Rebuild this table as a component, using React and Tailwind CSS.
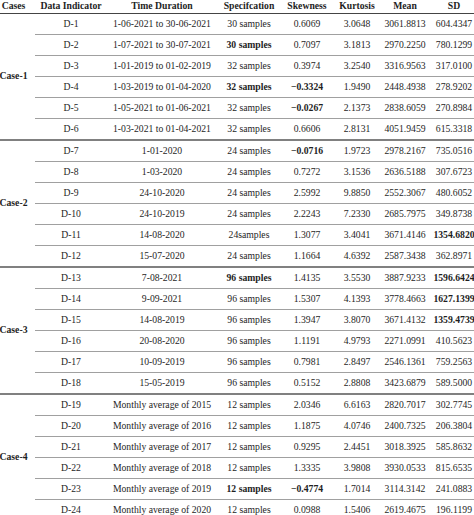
import React from "react";

const cols = "grid grid-cols-[72px_110px_64px_52px_48px_48px_50px]";

const groups = [
  {
    name: "Case-1",
    rows: [
      ["D-1", "1-06-2021 to 30-06-2021", "30 samples", "0.6069", "3.0648", "3061.8813", "604.4347"],
      ["D-2", "1-07-2021 to 30-07-2021", "*30 samples", "0.7097", "3.1813", "2970.2250", "780.1299"],
      ["D-3", "1-01-2019 to 01-02-2019", "32 samples", "0.3974", "3.2540", "3316.9563", "317.0100"],
      ["D-4", "1-03-2019 to 01-04-2020", "*32 samples", "*−0.3324", "1.9490", "2448.4938", "278.9202"],
      ["D-5", "1-05-2021 to 01-06-2021", "32 samples", "*−0.0267", "2.1373", "2838.6059", "270.8984"],
      ["D-6", "1-03-2021 to 01-04-2021", "32 samples", "0.6606", "2.8131", "4051.9459", "615.3318"],
    ],
  },
  {
    name: "Case-2",
    rows: [
      ["D-7", "1-01-2020", "24 samples", "*−0.0716", "1.9723", "2978.2167", "735.0516"],
      ["D-8", "1-03-2020", "24 samples", "0.7272", "3.1536", "2636.5188", "307.6723"],
      ["D-9", "24-10-2020", "24 samples", "2.5992", "9.8850", "2552.3067", "480.6052"],
      ["D-10", "24-10-2019", "24 samples", "2.2243", "7.2330", "2685.7975", "349.8738"],
      ["D-11", "14-08-2020", "24samples", "1.3077", "3.4041", "3671.4146", "*1354.6820"],
      ["D-12", "15-07-2020", "24 samples", "1.1664", "4.6392", "2587.3438", "362.8971"],
    ],
  },
  {
    name: "Case-3",
    rows: [
      ["D-13", "7-08-2021", "*96 samples", "1.4135", "3.5530", "3887.9233", "*1596.6424"],
      ["D-14", "9-09-2021", "96 samples", "1.5307", "4.1393", "3778.4663", "*1627.1399"],
      ["D-15", "14-08-2019", "96 samples", "1.3947", "3.8070", "3671.4132", "*1359.4739"],
      ["D-16", "20-08-2020", "96 samples", "1.1191", "4.9793", "2271.0991", "410.5623"],
      ["D-17", "10-09-2019", "96 samples", "0.7981", "2.8497", "2546.1361", "759.2563"],
      ["D-18", "15-05-2019", "96 samples", "0.5152", "2.8808", "3423.6879", "589.5000"],
    ],
  },
  {
    name: "Case-4",
    rows: [
      ["D-19", "Monthly average of 2015", "12 samples", "2.0346", "6.6163", "2820.7017", "302.7745"],
      ["D-20", "Monthly average of 2016", "12 samples", "1.1875", "4.0746", "2400.7325", "206.3804"],
      ["D-21", "Monthly average of 2017", "12 samples", "0.9295", "2.4451", "3018.3925", "585.8632"],
      ["D-22", "Monthly average of 2018", "12 samples", "1.3335", "3.9808", "3930.0533", "815.6535"],
      ["D-23", "Monthly average of 2019", "*12 samples", "*−0.4774", "1.7014", "3114.3142", "241.0883"],
      ["D-24", "Monthly average of 2020", "12 samples", "0.0988", "1.5406", "2619.4675", "196.1199"],
    ],
  },
];

const headers = ["Data Indicator", "Time Duration", "Specifcation", "Skewness", "Kurtosis", "Mean", "SD"];

// a leading "*" marks a bold value
function Cell({ value }) {
  const bold = value.startsWith("*");
  return (
    <div className={`flex items-center justify-center whitespace-nowrap ${bold ? "font-bold" : ""}`}>
      {bold ? value.slice(1) : value}
    </div>
  );
}

function App() {
  return (
    <div className="w-[474px] h-[515px] overflow-hidden bg-white">
      <div className="w-[487px] -ml-[8px] font-['Liberation_Serif',serif] text-[9.7px] text-[#1e1e1e]">
        <div className="grid grid-cols-[43px_72px_110px_64px_52px_48px_48px_50px] h-[14px] border-b border-[#444] font-bold">
          <div className="flex justify-center leading-[11px]">Cases</div>
          {headers.map((h) => (
            <div key={h} className="flex justify-center leading-[11px] whitespace-nowrap">
              {h}
            </div>
          ))}
        </div>

        {groups.map((g) => (
          <div key={g.name} className="flex border-b-2 border-[#808080]">
            <div className="w-[43px] shrink-0 flex items-center justify-center font-bold">{g.name}</div>
            <div className="flex-1">
              {g.rows.map((r, i) => (
                <div
                  key={r[0]}
                  className={`${cols} ${i < 5 ? "h-[21px] border-b border-[#a0a0a0]" : "h-[20px]"}`}
                >
                  {r.map((v, j) => (
                    <Cell key={j} value={v} />
                  ))}
                </div>
              ))}
            </div>
          </div>
        ))}
      </div>
    </div>
  );
}

export default App;
